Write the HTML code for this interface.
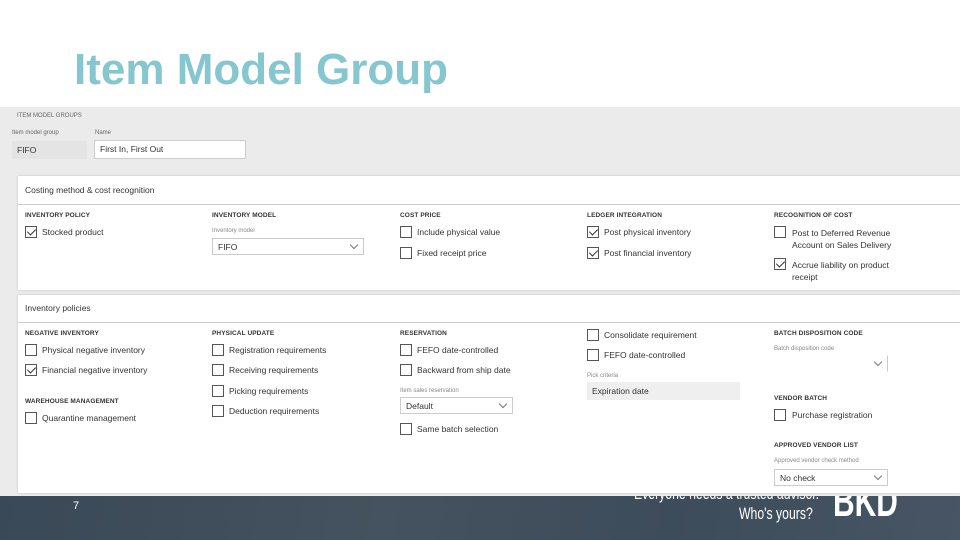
<!DOCTYPE html>
<html><head><style>
*{margin:0;padding:0;box-sizing:border-box}
body{width:960px;height:540px;overflow:hidden;background:#fff;font-family:"Liberation Sans",sans-serif;position:relative}
.a{position:absolute;white-space:nowrap}
.t{font-size:8.5px;color:#333}
.h{font-size:6.5px;color:#333;font-weight:bold;letter-spacing:.1px}
.c{font-size:6px;color:#888}
.cb{position:absolute;width:12px;height:12px;border:1px solid #555;background:#fff}
.cb.k::after{content:"";position:absolute;left:3px;top:0px;width:4px;height:7px;border:solid #333;border-width:0 1.3px 1.3px 0;transform:rotate(45deg)}
.in{position:absolute;border:1px solid #ccc;background:#fff;font-size:8.5px;color:#333;padding:3px 5px}
.dd::after{content:"";position:absolute;right:6px;top:3px;width:5px;height:5px;border:solid #777;border-width:0 1px 1px 0;transform:rotate(45deg)}
</style></head><body>
<div class="a" style="left:74px;top:45px;font-size:44px;color:#86c6ce;font-weight:bold;">Item Model Group</div>
<div class="a" style="left:0;top:496px;width:960px;height:44px;background:linear-gradient(100deg,#3a4957,#45525f 40%,#3d4c5b 70%,#475565)"></div>
<div class="a" style="left:634px;top:484px;font-size:17px;color:#fff;transform:scaleX(.72);transform-origin:left">Everyone needs a trusted advisor.</div>
<div class="a" style="left:739px;top:504px;font-size:17px;color:#fff;transform:scaleX(.72);transform-origin:left">Who's yours?</div>
<div class="a" style="left:833px;top:480px;font-size:44px;font-weight:bold;color:#fff;transform:scaleX(.68);transform-origin:left;line-height:44px">BKD</div>
<div class="a" style="left:73px;top:500px;font-size:11px;color:#fff">7</div>

<div class="a" style="left:0;top:107px;width:960px;height:389px;background:#ebebeb"></div>
<div class="a c" style="left:17px;top:113px;color:#666">ITEM MODEL GROUPS</div>
<div class="a c" style="left:12px;top:130px;color:#666">Item model group</div>
<div class="a c" style="left:95px;top:130px;color:#666">Name</div>
<div class="a t" style="left:12px;top:141px;width:75px;height:18px;background:#e4e4e4;padding:4px 5px">FIFO</div>
<div class="in" style="left:94px;top:140px;width:152px;height:19px">First In, First Out</div>

<div class="a" style="left:18px;top:176px;width:942px;height:114px;background:#fff;box-shadow:0 0 2px #bbb"></div>
<div class="a t" style="left:25px;top:185px">Costing method &amp; cost recognition</div>
<div class="a" style="left:18px;top:204px;width:942px;height:1px;background:#ccc"></div>
<div class="a h" style="left:25px;top:212px">INVENTORY POLICY</div>
<div class="cb k" style="left:25px;top:226px"></div><div class="a t" style="left:42px;top:227px">Stocked product</div>
<div class="a h" style="left:212px;top:212px">INVENTORY MODEL</div>
<div class="a c" style="left:212px;top:228px">Inventory model</div>
<div class="in dd" style="left:212px;top:238px;width:152px;height:17px">FIFO</div>
<div class="a h" style="left:400px;top:212px">COST PRICE</div>
<div class="cb" style="left:400px;top:226px"></div><div class="a t" style="left:417px;top:227px">Include physical value</div>
<div class="cb" style="left:400px;top:247px"></div><div class="a t" style="left:417px;top:248px">Fixed receipt price</div>
<div class="a h" style="left:587px;top:212px">LEDGER INTEGRATION</div>
<div class="cb k" style="left:587px;top:226px"></div><div class="a t" style="left:604px;top:227px">Post physical inventory</div>
<div class="cb k" style="left:587px;top:247px"></div><div class="a t" style="left:604px;top:248px">Post financial inventory</div>
<div class="a h" style="left:774px;top:212px">RECOGNITION OF COST</div>
<div class="cb" style="left:774px;top:226px"></div><div class="a t" style="left:792px;top:227px;line-height:12px">Post to Deferred Revenue<br>Account on Sales Delivery</div>
<div class="cb k" style="left:774px;top:258px"></div><div class="a t" style="left:792px;top:259px;line-height:12px">Accrue liability on product<br>receipt</div>

<div class="a" style="left:18px;top:295px;width:942px;height:198px;background:#fff;box-shadow:0 0 2px #bbb"></div>
<div class="a t" style="left:25px;top:303px">Inventory policies</div>
<div class="a" style="left:18px;top:322px;width:942px;height:1px;background:#ccc"></div>
<div class="a h" style="left:25px;top:330px">NEGATIVE INVENTORY</div>
<div class="cb" style="left:25px;top:344px"></div><div class="a t" style="left:42px;top:345px">Physical negative inventory</div>
<div class="cb k" style="left:25px;top:364px"></div><div class="a t" style="left:42px;top:365px">Financial negative inventory</div>
<div class="a h" style="left:25px;top:398px">WAREHOUSE MANAGEMENT</div>
<div class="cb" style="left:25px;top:412px"></div><div class="a t" style="left:42px;top:413px">Quarantine management</div>
<div class="a h" style="left:212px;top:330px">PHYSICAL UPDATE</div>
<div class="cb" style="left:212px;top:344px"></div><div class="a t" style="left:229px;top:345px">Registration requirements</div>
<div class="cb" style="left:212px;top:364px"></div><div class="a t" style="left:229px;top:365px">Receiving requirements</div>
<div class="cb" style="left:212px;top:385px"></div><div class="a t" style="left:229px;top:386px">Picking requirements</div>
<div class="cb" style="left:212px;top:405px"></div><div class="a t" style="left:229px;top:406px">Deduction requirements</div>
<div class="a h" style="left:400px;top:330px">RESERVATION</div>
<div class="cb" style="left:400px;top:344px"></div><div class="a t" style="left:417px;top:345px">FEFO date-controlled</div>
<div class="cb" style="left:400px;top:364px"></div><div class="a t" style="left:417px;top:365px">Backward from ship date</div>
<div class="a c" style="left:400px;top:388px">Item sales reservation</div>
<div class="in dd" style="left:400px;top:397px;width:113px;height:17px">Default</div>
<div class="cb" style="left:400px;top:423px"></div><div class="a t" style="left:417px;top:424px">Same batch selection</div>
<div class="cb" style="left:587px;top:329px"></div><div class="a t" style="left:604px;top:330px">Consolidate requirement</div>
<div class="cb" style="left:587px;top:349px"></div><div class="a t" style="left:604px;top:350px">FEFO date-controlled</div>
<div class="a c" style="left:587px;top:373px">Pick criteria</div>
<div class="a t" style="left:587px;top:382px;width:153px;height:18px;background:#efefef;padding:4px 5px">Expiration date</div>
<div class="a h" style="left:774px;top:330px">BATCH DISPOSITION CODE</div>
<div class="a c" style="left:774px;top:346px">Batch disposition code</div>
<div class="in dd" style="left:774px;top:355px;width:114px;height:17px;border-color:#fff #ccc #fff #fff"></div>
<div class="a h" style="left:774px;top:395px">VENDOR BATCH</div>
<div class="cb" style="left:774px;top:409px"></div><div class="a t" style="left:792px;top:410px">Purchase registration</div>
<div class="a h" style="left:774px;top:442px">APPROVED VENDOR LIST</div>
<div class="a c" style="left:774px;top:458px">Approved vendor check method</div>
<div class="in dd" style="left:774px;top:469px;width:114px;height:17px">No check</div>
</body></html>
